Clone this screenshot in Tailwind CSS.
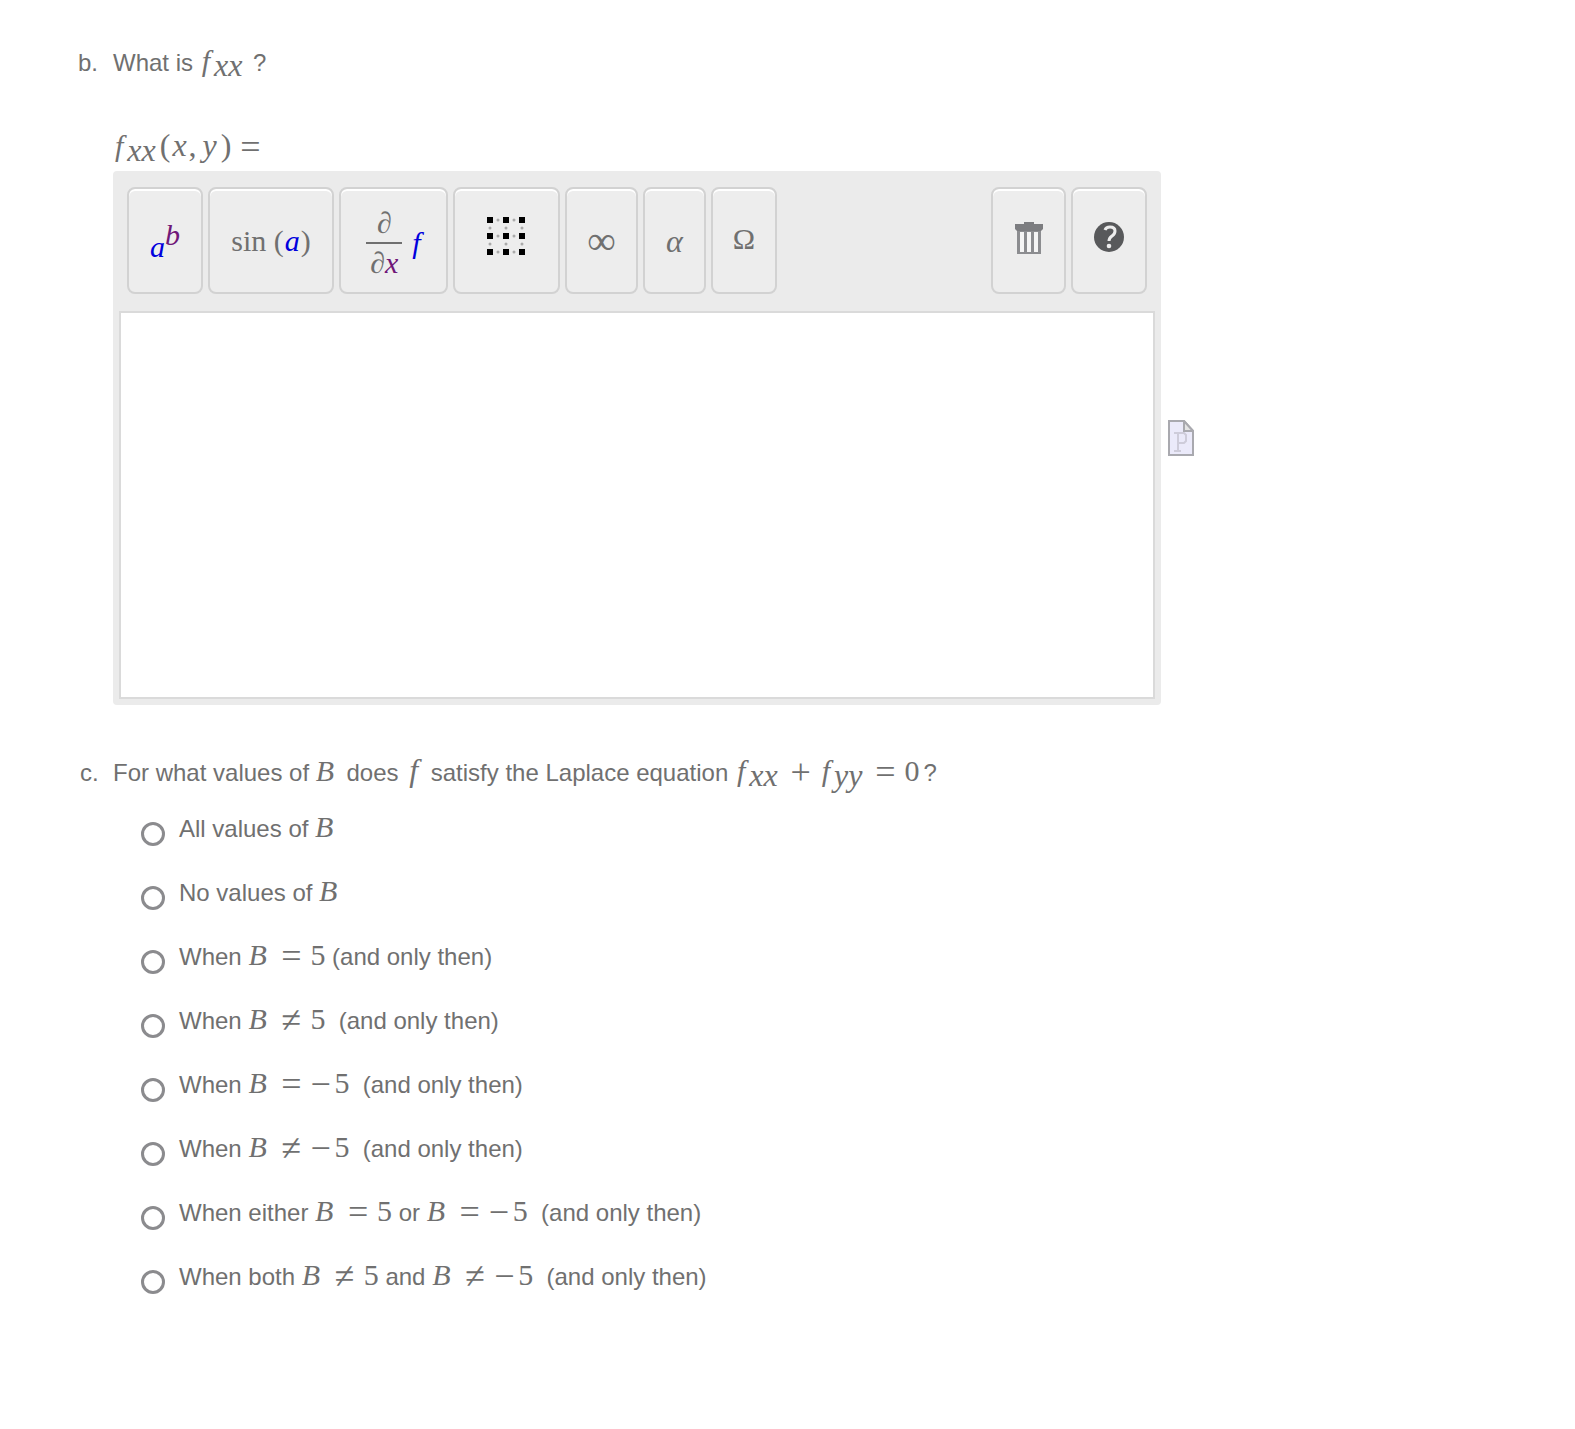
<!DOCTYPE html>
<html lang="en">
<head>
  <meta charset="UTF-8" />
  <meta name="viewport" content="width=device-width, initial-scale=1.0" />
  <title>Laplace Equation</title>
  <script src="https://cdn.jsdelivr.net/npm/@tailwindcss/browser@4"></script>
</head>
<body class="bg-white text-[#707070] text-2xl/10 font-['Liberation_Sans',Arial,sans-serif]">
  <main class="pl-[78px] pr-6 pt-[43px] pb-24">

    <!-- Part b -->
    <section class="flex">
      <div class="w-[35px] shrink-0">b.</div>
      <div class="flex-1 min-w-0">
        <p>What is <span class="font-['Liberation_Serif',serif] italic text-[30px] leading-none pl-0.5">f<sub class="static align-[-5px] text-[32px] leading-none px-1">xx</sub></span> ?</p>
        <label for="answer" class="block h-10 mt-[45px] mb-[3px] pl-0.5 font-['Liberation_Serif',serif]"><span class="italic text-[30px] leading-none">f<sub class="static align-[-5px] text-[32px] leading-none px-1">xx</sub></span><span class="text-[32px] leading-none">(<i class="px-0.5">x</i>,<i class="pl-1.5 pr-1">y</i>)<span class="inline-block w-[22px] mx-2 text-center text-[36px] leading-none align-[-3px]">=</span></span></label>

        <div class="flex items-center gap-[7px]">
          <div class="flex-1 max-w-[1048px] bg-[#ebebeb] rounded-sm px-1.5 pb-1.5">
            <!-- Toolbar -->
            <div class="flex gap-[5px] px-2 pt-4 pb-[17px] font-['Liberation_Serif',serif] text-[30px] leading-none [text-shadow:2px_2px_0_white]">
              <button aria-label="Exponent" class="w-[76px] h-[107px] rounded-lg border-2 border-[#d2d2d2] bg-[#ededed] shadow-[inset_0_2px_0_white]"><i class="text-[#0000dd]">a</i><sup class="static align-[12px] text-[30px] leading-none italic text-[#701878]">b</sup></button>
              <button class="w-[126px] h-[107px] rounded-lg border-2 border-[#d2d2d2] bg-[#ededed] shadow-[inset_0_2px_0_white]">sin (<i class="text-[#0000dd] px-px">a</i>)</button>
              <button aria-label="Partial derivative" class="flex items-center justify-center gap-2.5 w-[109px] h-[107px] pt-1 rounded-lg border-2 border-[#d2d2d2] bg-[#ededed] shadow-[inset_0_2px_0_white]">
                <span class="flex flex-col items-center gap-1">
                  <i>∂</i>
                  <span class="w-9 h-0.5 bg-[#707070]"></span>
                  <i>∂<span class="text-[#701878]">x</span></i>
                </span>
                <i class="text-[#0000dd]">f</i>
              </button>
              <button aria-label="Matrix" class="w-[107px] h-[107px] pr-0.5 pb-2.5 rounded-lg border-2 border-[#d2d2d2] bg-[#ededed] shadow-[inset_0_2px_0_white]">
                <svg class="mx-auto" width="40" height="40" viewBox="0 0 40 40">
                  <path d="M1 1h6v6H1zM17 1h6v6h-6zM33 1h6v6h-6zM1 17h6v6H1zM17 17h6v6h-6zM33 17h6v6h-6zM1 33h6v6H1zM17 33h6v6h-6zM33 33h6v6h-6z" fill="#000"/>
                  <g fill="#aaa">
                    <circle cx="12" cy="4" r="1.5"/><circle cx="28" cy="4" r="1.5"/>
                    <circle cx="12" cy="20" r="1.5"/><circle cx="28" cy="20" r="1.5"/>
                    <circle cx="12" cy="36" r="1.5"/><circle cx="28" cy="36" r="1.5"/>
                    <circle cx="4" cy="12" r="1.5"/><circle cx="20" cy="12" r="1.5"/><circle cx="36" cy="12" r="1.5"/>
                    <circle cx="4" cy="28" r="1.5"/><circle cx="20" cy="28" r="1.5"/><circle cx="36" cy="28" r="1.5"/>
                  </g>
                </svg>
              </button>
              <button class="w-[73px] h-[107px] rounded-lg border-2 border-[#d2d2d2] bg-[#ededed] shadow-[inset_0_2px_0_white] text-[40px]">∞</button>
              <button class="w-[63px] h-[107px] rounded-lg border-2 border-[#d2d2d2] bg-[#ededed] shadow-[inset_0_2px_0_white] text-[32px] italic">α</button>
              <button class="w-[66px] h-[107px] pb-1 rounded-lg border-2 border-[#d2d2d2] bg-[#ededed] shadow-[inset_0_2px_0_white]">Ω</button>
              <button aria-label="Clear" class="w-[75px] h-[107px] ml-auto pb-1.5 rounded-lg border-2 border-[#d2d2d2] bg-[#ededed] shadow-[inset_0_2px_0_white]">
                <svg class="mx-auto" width="28" height="32" viewBox="0 0 28 32">
                  <path d="M2 8h24v24H2z" fill="#8c8d90"/>
                  <path d="M9 0h10v2h9v5l-2 2H2L0 7V2h9z" fill="#7c7d80"/>
                  <path d="M5 10h4v20H5zM12 10h4v20h-4zM19 10h4v20h-4z" fill="#f5f5f5"/>
                </svg>
              </button>
              <button aria-label="Help" class="w-[76px] h-[107px] pb-2 rounded-lg border-2 border-[#d2d2d2] bg-[#ededed] shadow-[inset_0_2px_0_white]">
                <svg class="mx-auto" width="32" height="32" viewBox="0 0 32 32">
                  <circle cx="16" cy="16" r="15" fill="#58595b"/>
                  <path d="M12 9q1-3 5-3 5 0 5 4 0 3-3 5-3 2-3 5" fill="none" stroke="#ededed" stroke-width="3"/>
                  <circle cx="16" cy="25" r="2.3" fill="#ededed"/>
                </svg>
              </button>
            </div>
            <textarea id="answer" class="block w-full h-[388px] bg-white border-2 border-[#dadada] resize-none outline-none"></textarea>
          </div>
          <a href="#preview" aria-label="Preview" class="shrink-0">
            <svg width="26" height="36" viewBox="0 0 26 36">
              <path d="M1 1h15l9 10v24H1z" fill="#ebeafa" stroke="#a9a9af" stroke-width="2"/>
              <path d="M16 1v10h9z" fill="#e4e4e4" stroke="#a9a9af" stroke-width="2"/>
              <path d="M6 13h10l2 2v6l-2 2h-6M10 13v18M6 31h7" fill="none" stroke="#ceccda" stroke-width="2"/>
            </svg>
          </a>
        </div>
      </div>
    </section>

    <!-- Part c -->
    <section class="flex mt-12">
      <div class="w-[35px] shrink-0 pl-0.5">c.</div>
      <fieldset class="flex-1 min-w-0">
        <legend>For what values of <i class="inline-block w-6 font-['Liberation_Serif',serif] text-[30px] leading-none">B</i> does <i class="inline-block pl-1 pr-1.5 font-['Liberation_Serif',serif] text-[32px] leading-none">f</i> satisfy the Laplace equation <span class="font-['Liberation_Serif',serif] text-[30px] leading-none"><i class="pl-0.5">f<sub class="static align-[-5px] text-[32px] leading-none px-1">xx</sub></i><span class="inline-block w-[22px] mx-2 text-center text-[36px] leading-none align-[-3px]">+</span><i class="pl-0.5">f<sub class="static align-[-5px] text-[32px] leading-none px-1">yy</sub></i><span class="inline-block w-[22px] mx-2 text-center text-[36px] leading-none align-[-3px]">=</span><span class="pr-1">0</span></span>?</legend>

        <div class="flex flex-col items-start gap-6 mt-4 pl-7">
          <label class="flex h-10 gap-[14px]"><input type="radio" name="laplace" class="appearance-none size-6 mt-[13px] shrink-0 rounded-full border-3 border-[#8b8b8e] bg-white checked:bg-[#8b8b8e]"><span>All values of <i class="inline-block w-6 font-['Liberation_Serif',serif] text-[30px] leading-none">B</i></span></label>
          <label class="flex h-10 gap-[14px]"><input type="radio" name="laplace" class="appearance-none size-6 mt-[13px] shrink-0 rounded-full border-3 border-[#8b8b8e] bg-white checked:bg-[#8b8b8e]"><span>No values of <i class="inline-block w-6 font-['Liberation_Serif',serif] text-[30px] leading-none">B</i></span></label>
          <label class="flex h-10 gap-[14px]"><input type="radio" name="laplace" class="appearance-none size-6 mt-[13px] shrink-0 rounded-full border-3 border-[#8b8b8e] bg-white checked:bg-[#8b8b8e]"><span>When <span class="font-['Liberation_Serif',serif] text-[30px] leading-none"><i class="inline-block w-6">B</i><span class="inline-block w-[22px] mx-2 text-center text-[36px] leading-none align-[-3px]">=</span>5</span> (and only then)</span></label>
          <label class="flex h-10 gap-[14px]"><input type="radio" name="laplace" class="appearance-none size-6 mt-[13px] shrink-0 rounded-full border-3 border-[#8b8b8e] bg-white checked:bg-[#8b8b8e]"><span>When <span class="font-['Liberation_Serif',serif] text-[30px] leading-none"><i class="inline-block w-6">B</i><span class="inline-block w-[22px] mx-2 text-center text-[36px] leading-none align-[-3px]">≠</span>5</span>&nbsp; (and only then)</span></label>
          <label class="flex h-10 gap-[14px]"><input type="radio" name="laplace" class="appearance-none size-6 mt-[13px] shrink-0 rounded-full border-3 border-[#8b8b8e] bg-white checked:bg-[#8b8b8e]"><span>When <span class="font-['Liberation_Serif',serif] text-[30px] leading-none"><i class="inline-block w-6">B</i><span class="inline-block w-[22px] mx-2 text-center text-[36px] leading-none align-[-3px]">=</span><span class="inline-block w-6 text-[36px] leading-none align-[-3px]">−</span>5</span>&nbsp; (and only then)</span></label>
          <label class="flex h-10 gap-[14px]"><input type="radio" name="laplace" class="appearance-none size-6 mt-[13px] shrink-0 rounded-full border-3 border-[#8b8b8e] bg-white checked:bg-[#8b8b8e]"><span>When <span class="font-['Liberation_Serif',serif] text-[30px] leading-none"><i class="inline-block w-6">B</i><span class="inline-block w-[22px] mx-2 text-center text-[36px] leading-none align-[-3px]">≠</span><span class="inline-block w-6 text-[36px] leading-none align-[-3px]">−</span>5</span>&nbsp; (and only then)</span></label>
          <label class="flex h-10 gap-[14px]"><input type="radio" name="laplace" class="appearance-none size-6 mt-[13px] shrink-0 rounded-full border-3 border-[#8b8b8e] bg-white checked:bg-[#8b8b8e]"><span>When either <span class="font-['Liberation_Serif',serif] text-[30px] leading-none"><i class="inline-block w-6">B</i><span class="inline-block w-[22px] mx-2 text-center text-[36px] leading-none align-[-3px]">=</span>5</span> or <span class="font-['Liberation_Serif',serif] text-[30px] leading-none"><i class="inline-block w-6">B</i><span class="inline-block w-[22px] mx-2 text-center text-[36px] leading-none align-[-3px]">=</span><span class="inline-block w-6 text-[36px] leading-none align-[-3px]">−</span>5</span>&nbsp; (and only then)</span></label>
          <label class="flex h-10 gap-[14px]"><input type="radio" name="laplace" class="appearance-none size-6 mt-[13px] shrink-0 rounded-full border-3 border-[#8b8b8e] bg-white checked:bg-[#8b8b8e]"><span>When both <span class="font-['Liberation_Serif',serif] text-[30px] leading-none"><i class="inline-block w-6">B</i><span class="inline-block w-[22px] mx-2 text-center text-[36px] leading-none align-[-3px]">≠</span>5</span> and <span class="font-['Liberation_Serif',serif] text-[30px] leading-none"><i class="inline-block w-6">B</i><span class="inline-block w-[22px] mx-2 text-center text-[36px] leading-none align-[-3px]">≠</span><span class="inline-block w-6 text-[36px] leading-none align-[-3px]">−</span>5</span>&nbsp; (and only then)</span></label>
        </div>
      </fieldset>
    </section>
  </main>
</body>
</html>
